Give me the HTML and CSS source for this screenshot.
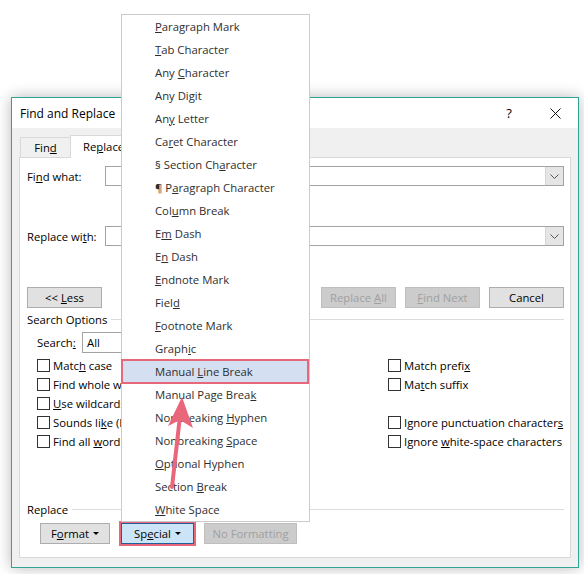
FILE: index.html
```html
<!DOCTYPE html>
<html lang="en">
<head>
  <meta charset="UTF-8" />
  <title>Find and Replace</title>
  <link rel="stylesheet" href="styles.css">
</head>
<body>

<div class="dialog">
  <div class="titlebar">
    <span class="title">Find and Replace</span>
    <span class="title-btn help">?</span>
    <span class="title-btn">
      <svg width="11" height="11" viewBox="0 0 11 11"><path d="M0.5 0.5 L10.5 10.5 M10.5 0.5 L0.5 10.5" stroke="#111" stroke-width="1" fill="none"/></svg>
    </span>
  </div>

  <div class="dialog-body">
    <div class="tabs">
      <div class="tab find-tab"><span>Fin<u>d</u></span></div>
      <div class="tab active"><span>Re<u>p</u>lace</span></div>
      <div class="tab"><span><u>G</u>o To</span></div>
    </div>

    <div class="panel">
      <div class="field-row first">
        <span class="field-label">Fi<u>n</u>d what:</span>
        <div class="combo"><span class="combo-btn"><svg width="9" height="5" viewBox="0 0 9 5"><path d="M0.5 0.5 L4.5 4.5 L8.5 0.5" stroke="#555" fill="none"/></svg></span></div>
      </div>
      <div class="field-row second">
        <span class="field-label">Replace wi<u>t</u>h:</span>
        <div class="combo"><span class="combo-btn"><svg width="9" height="5" viewBox="0 0 9 5"><path d="M0.5 0.5 L4.5 4.5 L8.5 0.5" stroke="#555" fill="none"/></svg></span></div>
      </div>

      <div class="btn-row">
        <button class="btn"><span>&lt;&lt; <u>L</u>ess</span></button>
        <div class="btn-group">
          <button class="btn disabled"><span>Replace <u>A</u>ll</span></button>
          <button class="btn disabled"><span><u>F</u>ind Next</span></button>
          <button class="btn"><span>Cancel</span></button>
        </div>
      </div>

      <div class="group-head"><span>Search Options</span></div>

      <div class="search-row">
        <span class="search-label">Search<u>:</u></span>
        <div class="select">All</div>
      </div>

      <div class="checks">
        <label class="check"><span class="box"></span><span>Matc<u>h</u> case</span></label>
        <label class="check"><span class="box"></span><span>Match prefi<u>x</u></span></label>
        <label class="check"><span class="box"></span><span>Find whole words onl<u>y</u></span></label>
        <label class="check"><span class="box"></span><span>Ma<u>t</u>ch suffix</span></label>
        <label class="check"><span class="box"></span><span><u>U</u>se wildcards</span></label>
        <span></span>
        <label class="check"><span class="box"></span><span>Sounds li<u>k</u>e (English)</span></label>
        <label class="check"><span class="box"></span><span>Ignore punctuation character<u>s</u></span></label>
        <label class="check"><span class="box"></span><span>Find all <u>w</u>ord forms (English)</span></label>
        <label class="check"><span class="box"></span><span>Ignore <u>w</u>hite-space characters</span></label>
      </div>

      <div class="group-head replace-head"><span>Replace</span></div>

      <div class="bottom-row">
        <button class="btn format"><span>F<u>o</u>rmat</span><span class="caret"></span></button>
        <button class="btn special"><span>Sp<u>e</u>cial</span><span class="caret"></span></button>
        <button class="btn disabled no-format"><span>No Formatting</span></button>
      </div>
    </div>
  </div>
</div>

<!-- Special menu -->
<div class="menu">
  <div class="menu-item"><u>P</u>aragraph Mark</div>
  <div class="menu-item"><u>T</u>ab Character</div>
  <div class="menu-item">Any <u>C</u>haracter</div>
  <div class="menu-item">Any Di<u>g</u>it</div>
  <div class="menu-item">An<u>y</u> Letter</div>
  <div class="menu-item">Ca<u>r</u>et Character</div>
  <div class="menu-item">§ Section Ch<u>a</u>racter</div>
  <div class="menu-item">¶ P<u>a</u>ragraph Character</div>
  <div class="menu-item">Col<u>u</u>mn Break</div>
  <div class="menu-item">E<u>m</u> Dash</div>
  <div class="menu-item">E<u>n</u> Dash</div>
  <div class="menu-item"><u>E</u>ndnote Mark</div>
  <div class="menu-item">Fiel<u>d</u></div>
  <div class="menu-item"><u>F</u>ootnote Mark</div>
  <div class="menu-item">Graph<u>i</u>c</div>
  <div class="menu-item selected">Manual <u>L</u>ine Break</div>
  <div class="menu-item">Manual Page Brea<u>k</u></div>
  <div class="menu-item">Nonbreaking <u>H</u>yphen</div>
  <div class="menu-item">Nonbreaking <u>S</u>pace</div>
  <div class="menu-item"><u>O</u>ptional Hyphen</div>
  <div class="menu-item">Section <u>B</u>reak</div>
  <div class="menu-item"><u>W</u>hite Space</div>
</div>

<svg class="arrow" width="584" height="574" viewBox="0 0 584 574">
  <line x1="172" y1="487" x2="180" y2="416" stroke="#ea677b" stroke-width="4" stroke-linecap="round"/>
  <polygon points="182,397 193,428 180,420 168,426" fill="#ea677b"/>
</svg>

</body>
</html>
```

FILE: styles.css
```css
* {
  box-sizing: border-box;
}

body {
  margin: 0;
  width: 584px;
  height: 574px;
  position: relative;
  overflow: hidden;
  background: #fff;
  font-family: "Open Sans", Arial, sans-serif;
  font-size: 11.3px;
  color: #000;
}

u {
  text-decoration: underline;
  text-underline-offset: 1px;
}

/* dialog window */
.dialog {
  position: absolute;
  left: 11px;
  top: 97px;
  width: 568px;
  height: 471px;
  border: 1px solid #2ca593;
  background: #f0f0f0;
  box-shadow: 0 0 14px rgba(0,0,0,0.28);
  display: flex;
  flex-direction: column;
}

.titlebar {
  height: 30px;
  background: #fff;
  display: flex;
  align-items: center;
  padding-left: 8px;
}

.title {
  flex: 1;
  font-size: 12px;
}

.title-btn {
  width: 46px;
  height: 30px;
  display: flex;
  align-items: center;
  justify-content: center;
}

.help {
  font-size: 13px;
}

.dialog-body {
  flex: 1;
  display: flex;
  flex-direction: column;
  padding: 7px 7px 9px;
}

.tabs {
  display: flex;
  align-items: flex-end;
  height: 22px;
  padding-left: 1px;
}

.tab {
  height: 20px;
  padding: 0 12px;
  border: 1px solid #d9d9d9;
  border-bottom: none;
  background: #f0f0f0;
  display: flex;
  align-items: center;
  margin-left: -1px;
}

.tab.find-tab {
  width: 51px;
  justify-content: center;
  margin-left: 0;
}

.tab.active {
  height: 23px;
  margin-bottom: -1px;
  background: #fff;
  position: relative;
  z-index: 1;
  padding-bottom: 2px;
}

.panel {
  flex: 1;
  background: #fff;
  border: 1px solid #d9d9d9;
  display: flex;
  flex-direction: column;
  padding: 0 6px 0 7px;
}

.field-row {
  display: flex;
  align-items: center;
  height: 20px;
}

.field-row.first {
  margin-top: 8px;
}

.field-row.second {
  margin-top: 40px;
}

.field-label {
  width: 78px;
}

.combo {
  flex: 1;
  height: 20px;
  border: 1px solid #a3a3a3;
  background: #fff;
  display: flex;
  justify-content: flex-end;
}

.combo-btn {
  width: 18px;
  height: 100%;
  background: #e5e5e5;
  border-left: 1px solid #d6d6d6;
  display: flex;
  align-items: center;
  justify-content: center;
}

.btn {
  height: 21px;
  width: 75px;
  border: 1px solid #adadad;
  background: #e1e1e1;
  font-family: inherit;
  font-size: inherit;
  color: #000;
  padding: 0;
  display: flex;
  align-items: center;
  justify-content: center;
  white-space: pre;
}

.btn.disabled {
  background: #cccccc;
  border-color: #bfbfbf;
  color: #a0a0a0;
}

.btn-row {
  display: flex;
  justify-content: space-between;
  margin-top: 41px;
}

.btn-group {
  display: flex;
  gap: 9px;
}

.group-head {
  display: flex;
  align-items: center;
  height: 14px;
  margin-top: 4px;
  gap: 4px;
}

.group-head::after {
  content: "";
  flex: 1;
  height: 1px;
  background: #dcdcdc;
}

.search-row {
  display: flex;
  align-items: center;
  height: 21px;
  margin-top: 6px;
  padding-left: 10px;
}

.search-label {
  width: 45px;
}

.select {
  width: 130px;
  height: 21px;
  border: 1px solid #a3a3a3;
  padding-left: 4px;
  display: flex;
  align-items: center;
}

.checks {
  display: grid;
  grid-template-columns: 351px 1fr;
  grid-auto-rows: 19px;
  margin-top: 3px;
  padding-left: 10px;
}

.check {
  display: flex;
  align-items: center;
  white-space: nowrap;
}

.box {
  width: 13px;
  height: 13px;
  border: 1px solid #333;
  background: #fff;
  margin-right: 3px;
}

.replace-head {
  margin-top: 51px;
}

.bottom-row {
  display: flex;
  margin-top: 7px;
  padding-left: 13px;
}

.btn.format {
  width: 70px;
}

.btn.special {
  width: 73px;
  margin-left: 11px;
  background: #cce4f7;
  border-color: #1f5f99;
  outline: 2px solid #e8677a;
}

.btn.no-format {
  width: 93px;
  margin-left: 10px;
}

.caret {
  display: inline-block;
  width: 0;
  height: 0;
  margin-left: 4px;
  border-left: 3px solid transparent;
  border-right: 3px solid transparent;
  border-top: 3px solid #000;
}

/* dropdown menu */
.menu {
  position: absolute;
  left: 121px;
  top: 14px;
  width: 189px;
  height: 508px;
  background: #fff;
  border: 1px solid #cbcbcb;
  z-index: 5;
}

.menu-item {
  height: 23px;
  line-height: 23px;
  padding-left: 33px;
  color: #2e2e2e;
  position: relative;
}

.menu-item.selected {
  background: #d4dff1;
}

.menu-item.selected::after {
  content: "";
  position: absolute;
  left: -1px;
  top: -1px;
  right: 0;
  bottom: -1px;
  border: 2px solid #e8677a;
}

.arrow {
  position: absolute;
  left: 0;
  top: 0;
  z-index: 10;
  pointer-events: none;
}
```
